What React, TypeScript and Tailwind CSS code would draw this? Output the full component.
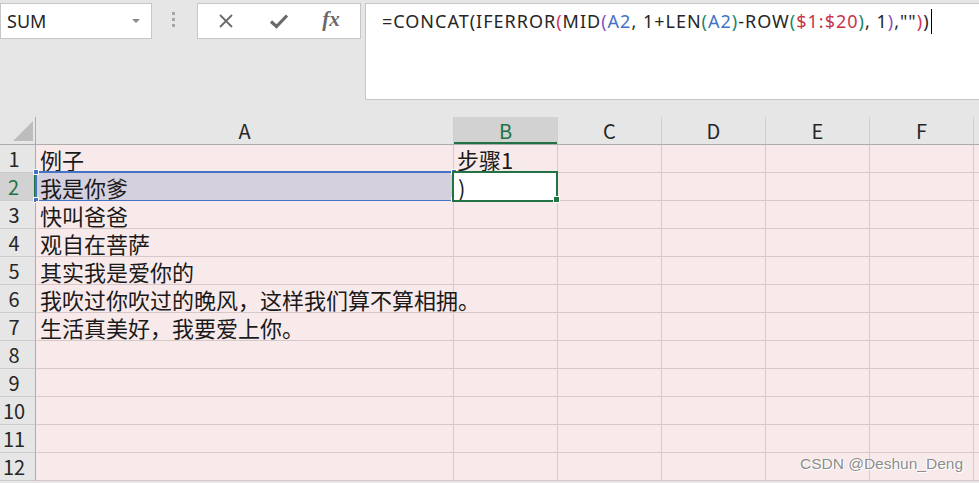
const CJK = "font-['Noto_Sans_CJK_SC','Noto_Sans',sans-serif]";

const cols = ['A', 'B', 'C', 'D', 'E', 'F'];
const widths = ['w-[418px]', 'w-[104px]', 'w-[104px]', 'w-[104px]', 'w-[104px]', 'w-[104px]'];

const colA = [
  '例子',
  '我是你爹',
  '快叫爸爸',
  '观自在菩萨',
  '其实我是爱你的',
  '我吹过你吹过的晚风，这样我们算不算相拥。',
  '生活真美好，我要爱上你。',
  '',
  '',
  '',
  '',
  '',
];

type Part = [string, string];
const formula: Part[] = [
  ['=CONCAT(IFERROR', 'text-[#262626]'],
  ['(', 'text-[#d8315b]'],
  ['MID', 'text-[#262626]'],
  ['(', 'text-[#8b4fc4]'],
  ['A2', 'text-[#4472c4]'],
  [', 1+LEN', 'text-[#262626]'],
  ['(', 'text-[#14876a]'],
  ['A2', 'text-[#4472c4]'],
  [')', 'text-[#14876a]'],
  ['-ROW', 'text-[#262626]'],
  ['(', 'text-[#14876a]'],
  ['$1:$20', 'text-[#c8334c]'],
  [')', 'text-[#14876a]'],
  [', 1', 'text-[#262626]'],
  [')', 'text-[#8b4fc4]'],
  [',""', 'text-[#262626]'],
  [')', 'text-[#d8315b]'],
  [')', 'text-[#262626]'],
];

function Handle({ pos }: { pos: string }) {
  return <span className={`absolute w-[6px] h-[6px] bg-[#4472c4] border border-white ${pos}`} />;
}

export default function App() {
  return (
    <div className="relative w-[979px] h-[483px] overflow-hidden bg-[#e6e6e6]">
      {/* formula bar */}
      <div className="flex items-start h-[117px] pt-[3px]">
        <div className="flex items-center w-[152px] h-[36px] bg-white border border-[#c6c6c6] pl-[6px] pr-[11px]">
          <span className="flex-1 text-[18px] text-[#262626] font-['Noto_Sans',sans-serif]">SUM</span>
          <svg width="8" height="5" viewBox="0 0 8 5">
            <path d="M0 0 L8 0 L4 4 Z" fill="#8a8a8a" />
          </svg>
        </div>
        <div className="flex flex-col gap-[3px] ml-[20px] mt-[9px]">
          <span className="w-[3px] h-[3px] bg-[#a6a6a6]" />
          <span className="w-[3px] h-[3px] bg-[#a6a6a6]" />
          <span className="w-[3px] h-[3px] bg-[#a6a6a6]" />
        </div>
        <div className="flex items-center w-[164px] h-[36px] ml-[22px] bg-white border border-[#c6c6c6]">
          <div className="w-[55px] flex justify-center">
            <svg width="16" height="16" viewBox="0 0 16 16">
              <path d="M2 2 L14 14 M14 2 L2 14" stroke="#6a6a6a" strokeWidth="1.8" />
            </svg>
          </div>
          <div className="w-[52px] flex justify-center">
            <svg width="20" height="16" viewBox="0 0 20 16">
              <path d="M2 8.5 L7.5 13.5 L18 2.5" stroke="#6a6a6a" strokeWidth="3.2" fill="none" />
            </svg>
          </div>
          <div className="w-[52px] flex justify-center">
            <span className="font-['Liberation_Serif',serif] italic font-bold text-[21px] leading-none text-[#6a6a6a] -mt-[3px]">fx</span>
          </div>
        </div>
        <div className="flex-1 h-[97px] ml-[4px] -mr-[4px] bg-white border border-[#c6c6c6] pl-[16px] pt-[4px]">
          <div className="flex items-center h-[26px] font-['Noto_Sans',sans-serif] text-[18px] tracking-[1px] whitespace-pre">
            {formula.map(([t, c], i) => (
              <span key={i} className={c}>{t}</span>
            ))}
            <span className="w-px h-[25px] bg-black ml-[1px]" />
          </div>
        </div>
      </div>

      {/* column headers */}
      <div className={`flex h-[28px] border-b border-[#acacac] ${CJK}`}>
        <div className="relative w-[36px] border-r border-[#acacac]">
          <svg className="absolute left-[13px] top-[4px]" width="20" height="20" viewBox="0 0 20 20">
            <path d="M0 20 L20 20 L20 0 Z" fill="#bdbdbd" />
          </svg>
        </div>
        {cols.map((c, i) => (
          <div
            key={c}
            className={`${widths[i]} flex items-center justify-center text-[20px] border-r border-[#cfcfcf] ${
              c === 'B' ? 'bg-[#d2d2d2] text-[#217346] shadow-[inset_0_-2px_0_#217346]' : 'text-[#262626]'
            }`}
          >
            {c}
          </div>
        ))}
        <div className="flex-1" />
      </div>

      {/* rows */}
      <div className={CJK}>
        {colA.map((a, r) => {
          const sel = r === 1;
          return (
            <div key={r} className="flex h-[28px]">
              <div
                className={`w-[36px] flex items-center justify-center pr-[7px] text-[20px] border-b border-[#cbcbcb] ${
                  sel
                    ? 'bg-[#d2d2d2] text-[#217346] border-r-2 border-r-[#217346]'
                    : 'bg-[#e6e6e6] text-[#262626] border-r border-r-[#acacac]'
                }`}
              >
                {r + 1}
              </div>
              <div
                className={`relative w-[418px] flex items-center pl-[4px] text-[22px] leading-none text-[#1a1a1a] whitespace-nowrap border-r border-b border-[#d8c8c8] ${
                  sel ? 'bg-[#d5d0de]' : 'bg-[#f8eaea]'
                } ${r === 5 ? 'overflow-visible z-10' : ''}`}
              >
                {a}
                {sel && (
                  <>
                    <span className="absolute -left-[1px] -top-[2px] w-[421px] h-[31px] border-2 border-[#4472c4]" />
                    <Handle pos="-left-[3px] -top-[4px]" />
                    <Handle pos="-left-[3px] -bottom-[3px]" />
                    <Handle pos="-right-[4px] -top-[4px]" />
                    <Handle pos="-right-[4px] -bottom-[3px]" />
                  </>
                )}
              </div>
              {cols.slice(1).map((c, i) => {
                const b2 = c === 'B' && sel;
                return (
                  <div
                    key={c}
                    className={`relative ${widths[i + 1]} flex items-center pl-[3px] text-[22px] leading-none text-[#1a1a1a] border-r border-b border-[#d8c8c8] ${
                      b2 ? 'bg-white z-20' : 'bg-[#f8eaea]'
                    }`}
                  >
                    {c === 'B' && r === 0 ? '步骤1' : ''}
                    {b2 && (
                      <>
                        <span className="pl-[1px]">)</span>
                        <span className="absolute -left-[2px] -top-[2px] w-[106px] h-[31px] border-2 border-[#217346]" />
                        <span className="absolute -right-[3px] -bottom-[3px] w-[7px] h-[7px] bg-[#217346] border border-white" />
                      </>
                    )}
                  </div>
                );
              })}
              <div className="flex-1 bg-[#f8eaea] border-b border-[#d8c8c8]" />
            </div>
          );
        })}
      </div>

      <div className="absolute right-[16px] bottom-[8px] font-['Liberation_Sans',sans-serif] text-[15.5px] text-[#8c8c8c] [text-shadow:1px_1px_0_#ffffff,-1px_0_0_#ffffff]">
        CSDN @Deshun_Deng
      </div>
    </div>
  );
}
